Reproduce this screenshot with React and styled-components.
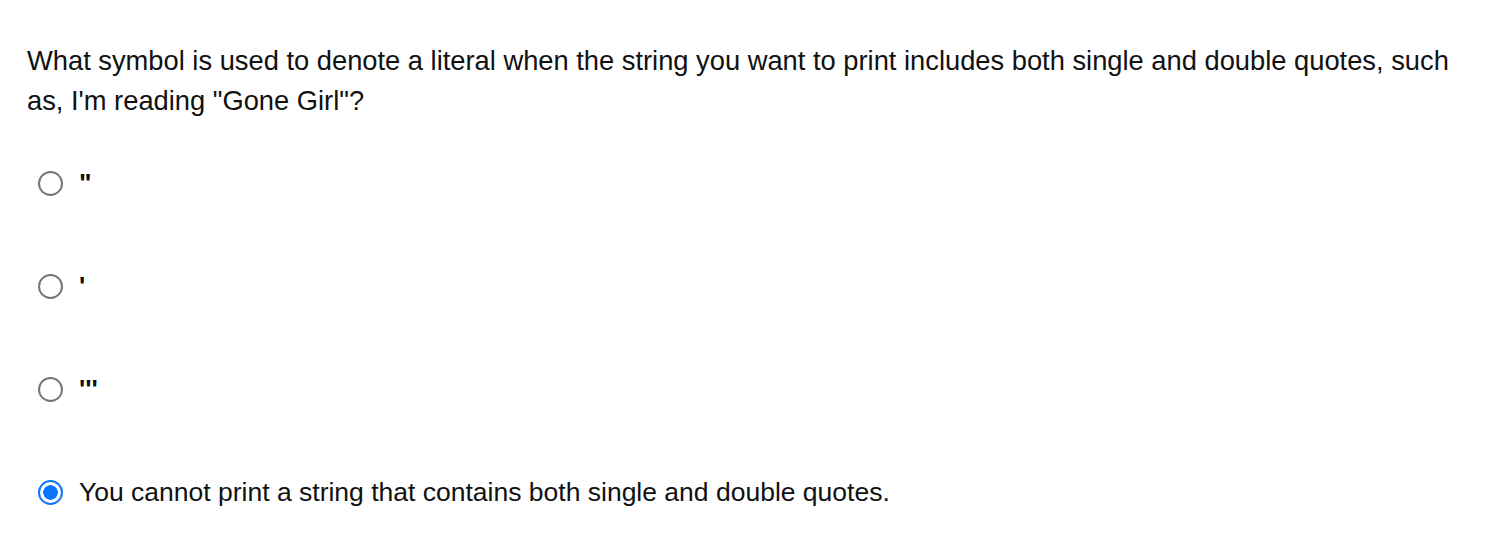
import React, { useState } from "react";
import styled, { createGlobalStyle } from "styled-components";

const Global = createGlobalStyle`
  html, body { margin: 0; padding: 0; background: #fff; }
  body { font-family: "Liberation Sans", Arial, sans-serif; color: #111; }
`;

const Page = styled.div`
  padding: 41px 27px 0 27px;
`;

const Question = styled.p`
  margin: 0;
  font-size: 27.3px;
  line-height: 40px;
  color: #111;
`;

const Options = styled.div`
  display: flex;
  flex-direction: column;
  gap: 63px;
  margin-top: 42px;
  padding-left: 11px;
`;

const Row = styled.label`
  display: flex;
  align-items: center;
  height: 40px;
  gap: 16px;
  cursor: pointer;
`;

const Radio = styled.input`
  appearance: none;
  margin: 0;
  width: 25px;
  height: 25px;
  border-radius: 50%;
  border: 2px solid #767676;
  box-sizing: border-box;
  background: #fff;
  flex: none;
  &:checked {
    border-color: #0a74fb;
    background: radial-gradient(circle, #0a74fb 0 7px, #fff 7.5px 100%);
  }
`;

const Text = styled.span`
  font-size: 26.5px;
  line-height: 40px;
  font-weight: ${(p) => (p.$bold ? 700 : 400)};
  color: #111;
`;

const options = [
  { text: '"', bold: true },
  { text: "'", bold: true },
  { text: "'''", bold: true },
  { text: "You cannot print a string that contains both single and double quotes.", bold: false },
];

export default function App() {
  const [sel, setSel] = useState(3);
  return (
    <>
      <Global />
      <Page>
        <Question>
          What symbol is used to denote a literal when the string you want to print includes both single and double quotes, such as, I'm reading "Gone Girl"?
        </Question>
        <Options>
          {options.map((o, i) => (
            <Row key={i}>
              <Radio type="radio" name="q" checked={sel === i} onChange={() => setSel(i)} />
              <Text $bold={o.bold}>{o.text}</Text>
            </Row>
          ))}
        </Options>
      </Page>
    </>
  );
}
